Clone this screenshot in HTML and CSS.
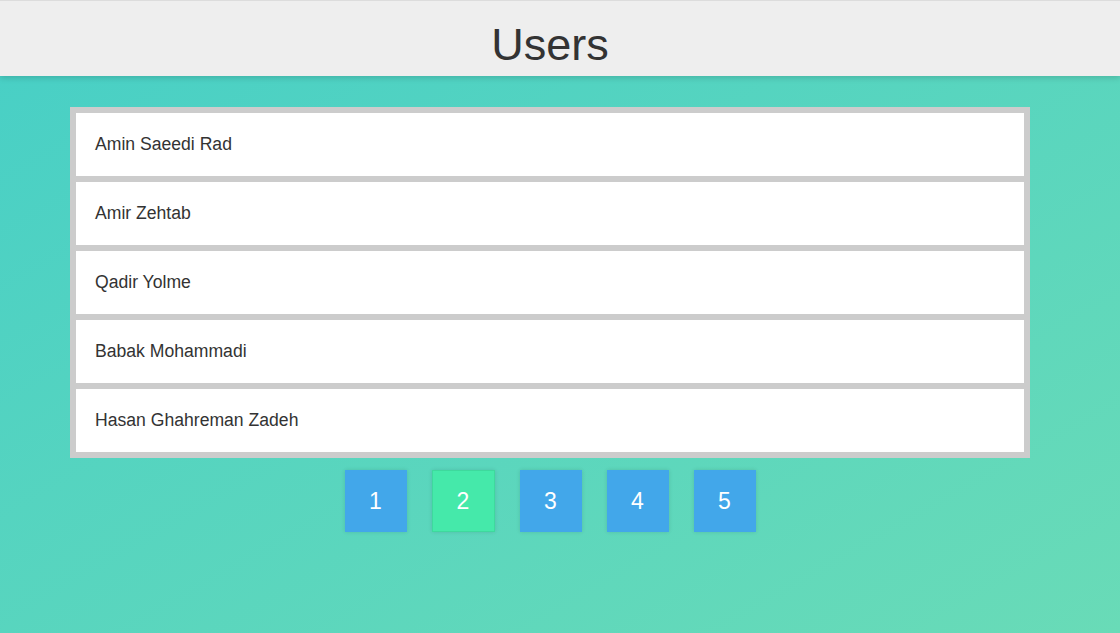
FILE: index.html
```html
<!DOCTYPE html>
<html lang="en">
<head>
<meta charset="utf-8">
<title>Users</title>
<link rel="stylesheet" href="styles.css">
</head>
<body>
<div class="header">
    <h1 class="title">Users</h1>
</div>

<div class="content">
    <ul class="userlist">
        <li class="user">Amin Saeedi Rad</li>
        <li class="user">Amir Zehtab</li>
        <li class="user">Qadir Yolme</li>
        <li class="user">Babak Mohammadi</li>
        <li class="user">Hasan Ghahreman Zadeh</li>
    </ul>

    <div class="pager">
        <span class="page">1</span>
        <span class="page active">2</span>
        <span class="page">3</span>
        <span class="page">4</span>
        <span class="page">5</span>
    </div>
</div>
</body>
</html>
```

FILE: styles.css
```css
html, body {
    height: 100%;
}
body {
    margin: 0;
    font-family: "Liberation Sans", Arial, sans-serif;
    color: #333;
    background: linear-gradient(to bottom right, #47cfc6, #69dbb7);
}
.header {
    background-color: #eeeeee;
    border-top: 1px solid #dcdcdc;
    height: 75px;
    box-shadow: 0 2px 6px rgba(0, 0, 0, 0.15);
    display: flex;
    justify-content: center;
    align-items: center;
}
.title {
    margin: 0;
    padding-top: 12px;
    font-size: 45px;
    font-weight: normal;
    color: #333;
    margin-right: 20px;
}
.content {
    width: 960px;
    margin: 31px 0 0 70px;
}
.userlist {
    list-style: none;
    margin: 0;
    padding: 6px;
    background-color: #cccccc;
    display: flex;
    flex-direction: column;
    gap: 6px;
}
.user {
    background-color: #fff;
    height: 63px;
    padding-left: 19px;
    display: flex;
    align-items: center;
    font-size: 17.6px;
}
.pager {
    display: flex;
    justify-content: center;
    gap: 25px;
    margin-top: 12px;
}
.page {
    width: 62px;
    height: 62px;
    display: flex;
    justify-content: center;
    align-items: center;
    background-color: #42a7ea;
    color: #fff;
    font-size: 23px;
    box-shadow: 0 0 4px rgba(0, 0, 0, 0.12);
}
.page.active {
    background-color: #45e9aa;
    border: 1px solid #3ed99d;
    box-sizing: border-box;
    width: 63px;
    height: 62px;
}
```
